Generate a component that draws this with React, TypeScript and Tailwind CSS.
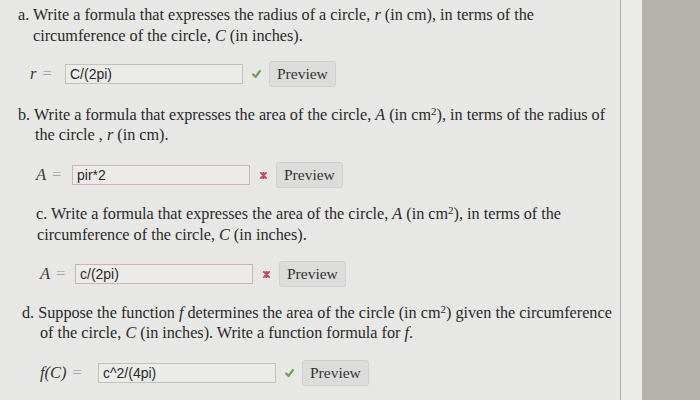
import React from "react";

const serif = { fontFamily: '"Liberation Serif", "Times New Roman", serif' };

function Check() {
  return (
    <svg width="9" height="8" viewBox="0 0 10 9" className="shrink-0">
      <path d="M1.2 5 L4 7.8 L8.8 1.2" fill="none" stroke="#6ea54a" strokeWidth="2.6" strokeLinecap="round" strokeLinejoin="round" />
    </svg>
  );
}

function Cross() {
  return (
    <svg width="7" height="7" viewBox="0 0 8 8" className="shrink-0">
      <path d="M1 1 L7 7 M7 1 L1 7 M4 0.5 L4 7.5" stroke="#c4495a" strokeWidth="2.2" strokeLinecap="round" />
    </svg>
  );
}

interface RowProps {
  label: React.ReactNode;
  value: string;
  ok: boolean;
  indent: string;
  labelW: string;
  cursor?: boolean;
}

function AnswerRow({ label, value, ok, indent, labelW, cursor }: RowProps) {
  return (
    <div className={`relative flex items-center h-[26px] ${indent}`}>
      {cursor && (
        <svg className="absolute left-[-14px] top-[2px]" width="12" height="20" viewBox="0 0 12 20">
          <path d="M1 1 L1 15 L4.5 12 L7 18 L9.2 17 L6.8 11.2 L11 11 Z" fill="#f4f4f2" stroke="#555" strokeWidth="1" strokeLinejoin="round" />
        </svg>
      )}
      <div className={`flex items-center ${labelW} text-[16.5px] text-[#333]`} style={serif}>
        {label}
        <span className="ml-[6px] text-[#a8a8a8]">=</span>
      </div>
      <div
        className={`w-[178px] h-[20px] flex items-center pl-[4px] text-[14px] text-[#2a2a2a] bg-[#ebebe9] border ${
          ok ? "border-[#bcc7b2]" : "border-[#d3b2b4]"
        }`}
        style={{ fontFamily: '"Liberation Sans", Arial, sans-serif' }}
      >
        {value}
      </div>
      <div className="w-[26px] flex justify-center">{ok ? <Check /> : <Cross />}</div>
      <button
        className="h-[26px] px-[7px] rounded-[3px] bg-[#dcdcda] border border-[#cfcfcd] text-[15.5px] text-[#333]"
        style={serif}
      >
        Preview
      </button>
    </div>
  );
}

const I = ({ children }: { children: React.ReactNode }) => <span className="italic">{children}</span>;

export default function App() {
  return (
    <div className="w-[700px] h-[400px] flex overflow-hidden bg-[#b3b2ac]">
      <div className="w-[621px] h-full bg-[#e7e7e5] border-r border-[#a9a9a6] text-[#2a2a2a] text-[16.2px]" style={serif}>
        {/* a */}
        <div className="pt-[5px] pl-[18px] leading-[21px]">
          <div>a. Write a formula that expresses the radius of a circle, <I>r</I> (in cm), in terms of the</div>
          <div className="pl-[15px]">circumference of the circle, <I>C</I> (in inches).</div>
        </div>
        <div className="mt-[14px]">
          <AnswerRow label={<I>r</I>} value="C/(2pi)" ok indent="pl-[30px]" labelW="w-[35px]" />
        </div>

        {/* b */}
        <div className="mt-[18px] pl-[18px] leading-[20px]">
          <div>
            b. Write a formula that expresses the area of the circle, <I>A</I> (in cm<sup className="text-[11px]">2</sup>), in terms of the radius of
          </div>
          <div className="pl-[17px]">the circle , <I>r</I> (in cm).</div>
        </div>
        <div className="mt-[17px]">
          <AnswerRow label={<I>A</I>} value="pir*2" ok={false} indent="pl-[36px]" labelW="w-[36px]" />
        </div>

        {/* c */}
        <div className="mt-[16px] pl-[36px] leading-[21px]">
          <div>
            c. Write a formula that expresses the area of the circle, <I>A</I> (in cm<sup className="text-[11px]">2</sup>), in terms of the
          </div>
          <div className="pl-[1px]">circumference of the circle, <I>C</I> (in inches).</div>
        </div>
        <div className="mt-[15px]">
          <AnswerRow label={<I>A</I>} value="c/(2pi)" ok={false} indent="pl-[40px]" labelW="w-[35px]" cursor />
        </div>

        {/* d */}
        <div className="mt-[16px] pl-[22px] leading-[20px]">
          <div>
            d. Suppose the function <I>f</I> determines the area of the circle (in cm<sup className="text-[11px]">2</sup>) given the circumference
          </div>
          <div className="pl-[18px]">
            of the circle, <I>C</I> (in inches). Write a function formula for <I>f</I>.
          </div>
        </div>
        <div className="mt-[17px]">
          <AnswerRow label={<I>f(C)</I>} value="c^2/(4pi)" ok indent="pl-[40px]" labelW="w-[58px]" />
        </div>
      </div>
      <div className="w-[21px] h-full bg-[#ebebea]" />
      <div className="flex-1 h-full bg-[#b3b2ac]" />
    </div>
  );
}
